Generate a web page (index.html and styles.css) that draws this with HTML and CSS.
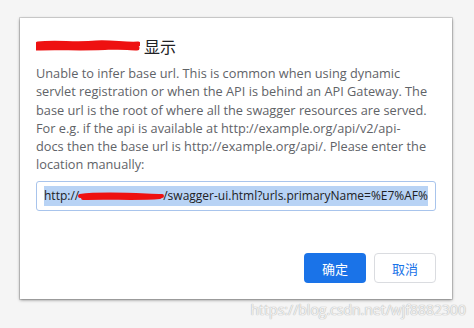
FILE: index.html
```html
<!DOCTYPE html>
<html lang="zh-CN">
<head>
    <meta charset="UTF-8">
    <meta name="viewport" content="width=device-width, initial-scale=1.0">
    <title>显示</title>
    <link rel="stylesheet" href="styles.css">
</head>
<body>
    <div class="dialog">
        <h1 class="dialog-title">
            <svg class="scribble" width="104" height="14" viewBox="0 0 104 14">
                <path d="M2 5 C20 3 40 6 60 4 C75 3 90 6 102 5 M1 9 C25 8 50 10 75 8 C85 8 95 9 101 9" stroke="#ee1111" stroke-width="5" fill="none" stroke-linecap="round"/>
            </svg>
            <span>显示</span>
        </h1>
        <p class="dialog-text">Unable to infer base url. This is common when using dynamic servlet registration or when the API is behind an API Gateway. The base url is the root of where all the swagger resources are served. For e.g. if the api is available at http://example.org/api/v2/api-<br>docs then the base url is http://example.org/api/. Please enter the location manually:</p>
        <div class="url-input">
            <span class="selected">http://<svg class="scribble-small" width="88" height="12" viewBox="0 0 88 12"><path d="M3 6 C25 3 55 5 85 6 M6 8 C35 7 60 9 83 7" stroke="#ee1111" stroke-width="4" fill="none" stroke-linecap="round"/></svg>/swagger-ui.html?urls.primaryName=%E7%AF%</span>
        </div>
        <div class="dialog-buttons">
            <button class="btn btn-ok">确定</button>
            <button class="btn btn-cancel">取消</button>
        </div>
    </div>
    <div class="watermark">https://blog.csdn.net/wjf8882300</div>
</body>
</html>
```

FILE: styles.css
```css
body {
    margin: 0;
    padding: 18px 0 0 20px;
    height: 328px;
    box-sizing: border-box;
    background-color: #f5f5f5;
    font-family: "Open Sans", "Noto Sans CJK SC", sans-serif;
    position: relative;
    overflow: hidden;
}
.dialog {
    width: 432px;
    height: 281px;
    box-sizing: border-box;
    padding: 18px 16px 16px;
    background-color: #fff;
    box-shadow: 0 1px 3px rgba(0, 0, 0, 0.45), 0 0 0 1px rgba(0, 0, 0, 0.12);
    display: flex;
    flex-direction: column;
}
.dialog-title {
    margin: 0;
    height: 20px;
    font-size: 16px;
    font-weight: normal;
    line-height: 20px;
    color: #202124;
    display: flex;
    align-items: center;
    gap: 4px;
}
.dialog-title span {
    font-family: "Noto Sans CJK SC", sans-serif;
}
.dialog-text {
    margin: 8px 0 0;
    font-size: 12.75px;
    line-height: 18.3px;
    color: #5f6368;
}
.url-input {
    margin-top: 7px;
    height: 30px;
    box-sizing: border-box;
    border: 1px solid #a8c4ec;
    border-radius: 3px;
    padding: 0 7px;
    display: flex;
    align-items: center;
    font-size: 12px;
    color: #202124;
    white-space: nowrap;
    overflow: hidden;
}
.selected {
    background-color: #b8d3f5;
    line-height: 20px;
    display: inline-flex;
    align-items: center;
}
.scribble-small {
    margin: 0 -2px;
}
.dialog-buttons {
    margin-top: auto;
    display: flex;
    justify-content: flex-end;
    gap: 8px;
}
.btn {
    width: 62px;
    height: 30px;
    border-radius: 4px;
    font-family: "Noto Sans CJK SC", sans-serif;
    font-size: 13px;
    cursor: pointer;
}
.btn-ok {
    background-color: #1a73e8;
    border: none;
    color: #fff;
}
.btn-cancel {
    background-color: #fff;
    border: 1px solid #dadce0;
    color: #1a73e8;
}
.watermark {
    position: absolute;
    right: 8px;
    bottom: 9px;
    font-family: "Open Sans", sans-serif;
    font-size: 14px;
    color: #f2f2f2;
    text-shadow: 0 0 1px #b5b5b5, 0 0 1px #b5b5b5;
}
```
